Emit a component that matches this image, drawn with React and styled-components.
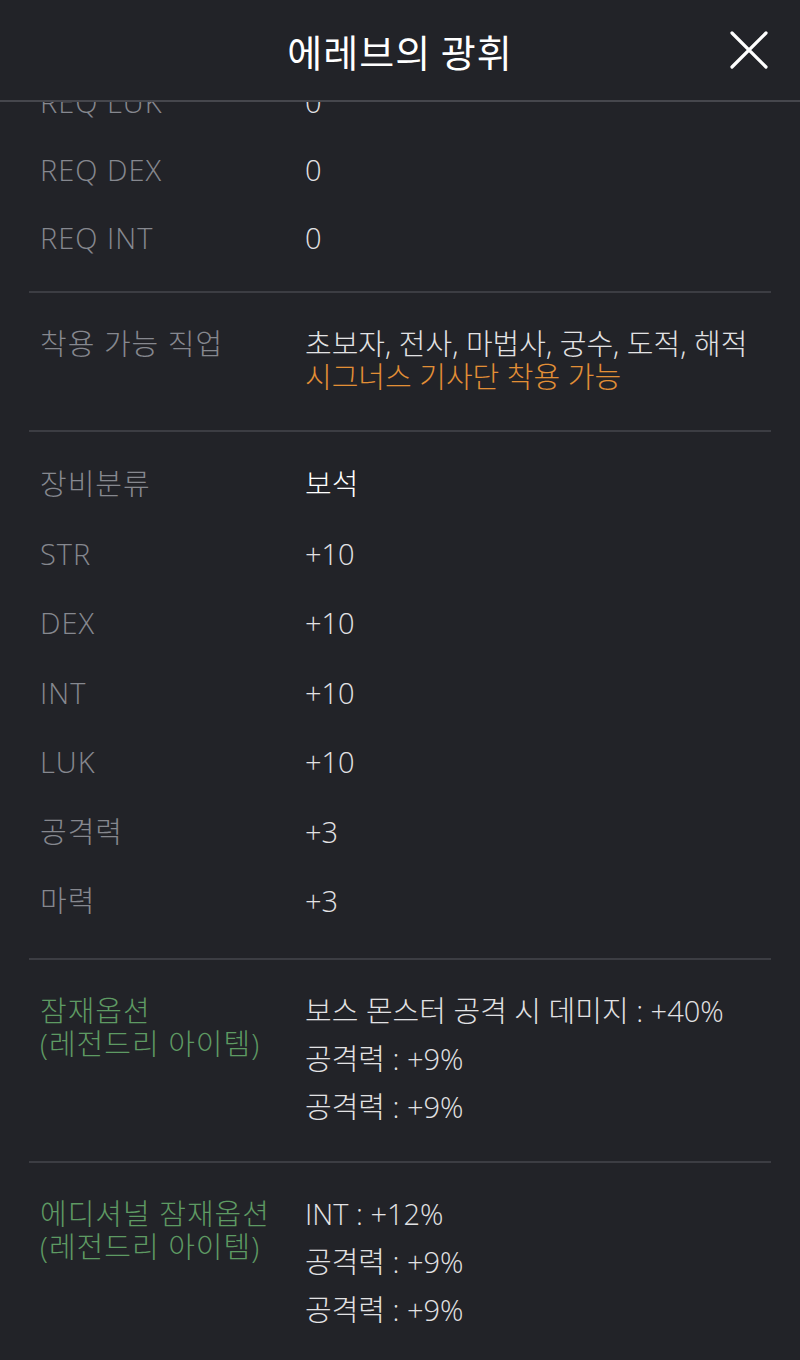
import React from "react";
import styled, { createGlobalStyle } from "styled-components";

const Global = createGlobalStyle`
  html, body { margin: 0; padding: 0; background: #222328; }
  body { font-family: "Open Sans", "Noto Sans CJK KR", sans-serif; -webkit-font-smoothing: antialiased; }
`;

const Screen = styled.div`
  width: 800px;
  height: 1360px;
  background: #222328;
  display: flex;
  flex-direction: column;
  overflow: hidden;
`;

const Header = styled.header`
  flex: 0 0 auto;
  height: 100px;
  border-bottom: 2px solid #46474d;
  display: flex;
  align-items: center;
  justify-content: center;
  position: relative;
  z-index: 2;
  background: #222328;
`;

const Title = styled.h1`
  margin: 0;
  font-family: "Noto Sans CJK KR", sans-serif;
  font-size: 38px;
  font-weight: 400;
  color: #ffffff;
  letter-spacing: 1px;
`;

const CloseButton = styled.button`
  position: absolute;
  right: 32px;
  top: 31px;
  width: 38px;
  height: 38px;
  padding: 0;
  border: none;
  background: transparent;
  display: flex;
  align-items: center;
  justify-content: center;
`;

const Body = styled.div`
  flex: 1 1 auto;
  overflow: hidden;
`;

const Content = styled.div`
  margin-top: -35px;
`;

const Section = styled.section`
  margin: 0 29px;
  padding: ${(p) => p.$pad};
  border-bottom: ${(p) => (p.$last ? "none" : "2px solid #3c3d43")};
`;

const Row = styled.div`
  display: flex;
  align-items: ${(p) => (p.$multi ? "flex-start" : "center")};
  height: ${(p) => (p.$h ? `${p.$h}px` : "auto")};
  padding-left: 11px;
`;

const Label = styled.div`
  width: 265px;
  flex: 0 0 265px;
  font-size: 29px;
  line-height: 33px;
  font-weight: 300;
  letter-spacing: 1px;
  color: ${(p) => (p.$green ? "#5e9a63" : "#86888f")};
  white-space: nowrap;
`;

const Values = styled.div`
  display: flex;
  flex-direction: column;
  gap: ${(p) => p.$gap || 0}px;
`;

const Value = styled.div`
  font-size: 29px;
  line-height: 33px;
  font-weight: 300;
  color: ${(p) => p.$color || "#e2e2e4"};
  white-space: nowrap;
`;

const XIcon = () => (
  <svg width="38" height="38" viewBox="0 0 38 38">
    <path d="M2 2 L36 36 M36 2 L2 36" stroke="#ffffff" strokeWidth="3.2" strokeLinecap="round" fill="none" />
  </svg>
);

const reqRows = [
  ["REQ LUK", "0"],
  ["REQ DEX", "0"],
  ["REQ INT", "0"],
];

const statRows = [
  ["장비분류", "보석", "#ffffff"],
  ["STR", "+10"],
  ["DEX", "+10"],
  ["INT", "+10"],
  ["LUK", "+10"],
  ["공격력", "+3"],
  ["마력", "+3"],
];

export default function App() {
  return (
    <Screen>
      <Global />
      <Header>
        <Title>에레브의 광휘</Title>
        <CloseButton aria-label="닫기">
          <XIcon />
        </CloseButton>
      </Header>
      <Body>
        <Content>
          <Section $pad="0 0 20px">
            {reqRows.map(([l, v]) => (
              <Row key={l} $h={68}>
                <Label>{l}</Label>
                <Value>{v}</Value>
              </Row>
            ))}
          </Section>
          <Section $pad="34px 0 37px">
            <Row $multi>
              <Label>착용 가능 직업</Label>
              <Values>
                <Value>초보자, 전사, 마법사, 궁수, 도적, 해적</Value>
                <Value $color="#e28f36">시그너스 기사단 착용 가능</Value>
              </Values>
            </Row>
          </Section>
          <Section $pad="17px 0 22px">
            {statRows.map(([l, v, c]) => (
              <Row key={l} $h={69.5}>
                <Label>{l}</Label>
                <Value $color={c}>{v}</Value>
              </Row>
            ))}
          </Section>
          <Section $pad="34px 0 38px">
            <Row $multi>
              <Label $green>
                잠재옵션
                <br />
                (레전드리 아이템)
              </Label>
              <Values $gap={15}>
                <Value>보스 몬스터 공격 시 데미지 : +40%</Value>
                <Value>공격력 : +9%</Value>
                <Value>공격력 : +9%</Value>
              </Values>
            </Row>
          </Section>
          <Section $pad="34px 0 38px" $last>
            <Row $multi>
              <Label $green>
                에디셔널 잠재옵션
                <br />
                (레전드리 아이템)
              </Label>
              <Values $gap={15}>
                <Value>INT : +12%</Value>
                <Value>공격력 : +9%</Value>
                <Value>공격력 : +9%</Value>
              </Values>
            </Row>
          </Section>
        </Content>
      </Body>
    </Screen>
  );
}
